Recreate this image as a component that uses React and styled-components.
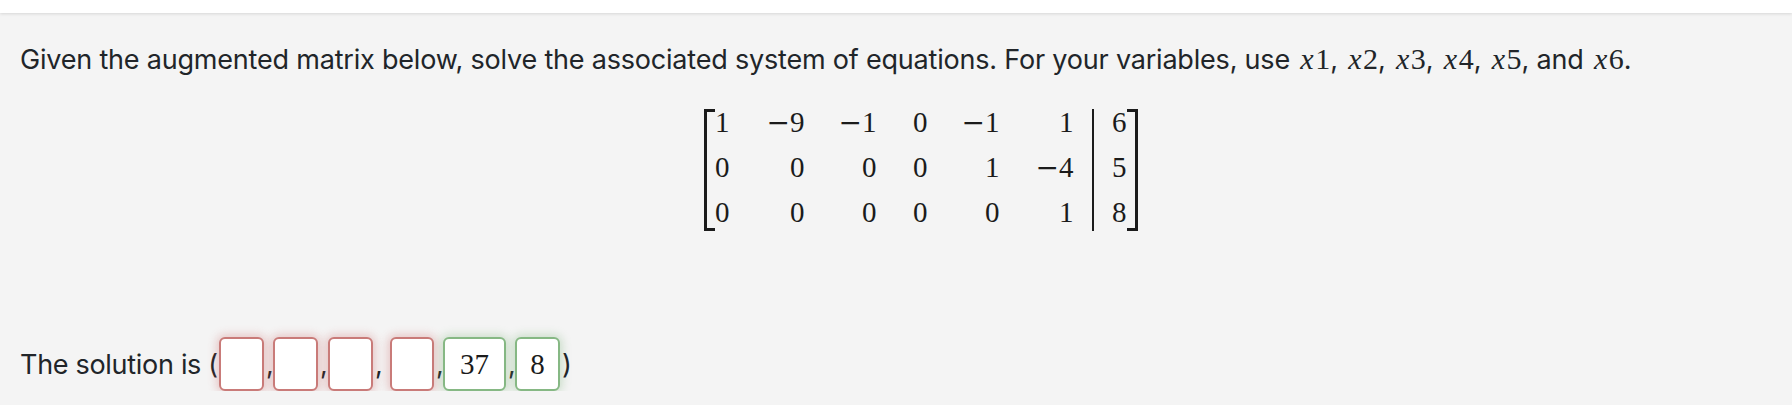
import React from "react";
import styled, { createGlobalStyle } from "styled-components";

const GlobalStyle = createGlobalStyle`
  html, body { margin: 0; padding: 0; }
  body {
    background: #f4f4f4;
    color: #212529;
    font-family: Inter, "Noto Sans", "Liberation Sans", sans-serif;
  }
`;

const TopBar = styled.div`
  height: 13px;
  background: #ffffff;
  box-shadow: 0 1px 3px rgba(0, 0, 0, 0.12);
`;

const Content = styled.main`
  padding: 26px 20px 0 20px;
`;

const Prompt = styled.p`
  margin: 0;
  font-size: 27px;
  letter-spacing: -0.2px;
  line-height: 40px;
  white-space: nowrap;
`;

const MathVar = styled.span`
  font-family: "Liberation Serif", "DejaVu Serif", serif;
  font-size: 30px;
  letter-spacing: 0;
  padding-left: 3px;
`;

const Italic = styled.i`
  font-style: italic;
  margin-right: 1.5px;
`;

const Display = styled.div`
  display: flex;
  justify-content: center;
  margin-top: 20px;
  padding-left: 49px;
`;

const Matrix = styled.div`
  display: flex;
  align-items: stretch;
  font-family: "Liberation Serif", "DejaVu Serif", serif;
  font-size: 29px;
  color: #1b1b1b;
`;

const Bracket = styled.div`
  width: 8px;
  margin: 9px 0 4px 0;
  border: 3px solid #1b1b1b;
  ${(p) => (p.$side === "left" ? "border-right: none;" : "border-left: none;")}
`;

const Grid = styled.div`
  display: grid;
  grid-template-columns: ${(p) => p.$cols};
  grid-auto-rows: 45px;
  line-height: 45px;
`;

const Cell = styled.div`
  text-align: right;
  white-space: nowrap;
`;

const Minus = styled.span`
  font-family: "DejaVu Serif", serif;
  font-size: 28px;
`;

const Divider = styled.div`
  width: 2px;
  margin: 9px 0 4px 18px;
  background: #1b1b1b;
`;

const SolutionRow = styled.div`
  display: flex;
  align-items: center;
  margin-top: 102px;
  font-size: 27px;
  letter-spacing: -0.3px;
  white-space: pre;
`;

const Lead = styled.span`
  margin-right: 1px;
`;

const Sep = styled.span`
  width: ${(p) => p.$w}px;
  padding-left: 2px;
  box-sizing: border-box;
`;

const AnswerBox = styled.div`
  box-sizing: border-box;
  width: ${(p) => p.$width}px;
  height: 54px;
  background: #ffffff;
  border: 2px solid ${(p) => (p.$ok ? "#86b884" : "#c97b79")};
  border-radius: 6px;
  box-shadow: 0 0 10px 2px
    ${(p) => (p.$ok ? "rgba(110, 170, 105, 0.32)" : "rgba(200, 90, 90, 0.32)")};
  display: flex;
  align-items: center;
  justify-content: center;
  font-family: "Liberation Serif", "DejaVu Serif", serif;
  font-size: 29px;
  letter-spacing: 0;
  color: #1b1b1b;
`;

const matrix = [
  [1, -9, -1, 0, -1, 1],
  [0, 0, 0, 0, 1, -4],
  [0, 0, 0, 0, 0, 1],
];
const aug = [6, 5, 8];

const Num = ({ v }) =>
  v < 0 ? (
    <>
      <Minus>−</Minus>
      {Math.abs(v)}
    </>
  ) : (
    <>{v}</>
  );

const Var = ({ n }) => (
  <MathVar>
    <Italic>x</Italic>
    {n}
  </MathVar>
);

const answers = [
  { w: 45, ok: false, v: "", sep: 9 },
  { w: 45, ok: false, v: "", sep: 10 },
  { w: 45, ok: false, v: "", sep: 17 },
  { w: 44, ok: false, v: "", sep: 9 },
  { w: 63, ok: true, v: "37", sep: 9 },
  { w: 45, ok: true, v: "8" },
];

export default function App() {
  return (
    <>
      <GlobalStyle />
      <TopBar />
      <Content>
        <Prompt>
          Given the augmented matrix below, solve the associated system of
          equations. For your variables, use <Var n={1} />, <Var n={2} />,{" "}
          <Var n={3} />, <Var n={4} />, <Var n={5} />, and <Var n={6} />.
        </Prompt>
        <Display>
          <Matrix>
            <Bracket $side="left" />
            <Grid $cols="15px 75px 72px 51px 72px 74px">
              {matrix.flat().map((v, i) => (
                <Cell key={i}>
                  <Num v={v} />
                </Cell>
              ))}
            </Grid>
            <Divider />
            <Grid $cols="33px">
              {aug.map((v, i) => (
                <Cell key={i}>{v}</Cell>
              ))}
            </Grid>
            <Bracket $side="right" />
          </Matrix>
        </Display>
        <SolutionRow>
          <Lead>The solution is (</Lead>
          {answers.map((a, i) => (
            <React.Fragment key={i}>
              <AnswerBox $width={a.w} $ok={a.ok}>
                {a.v}
              </AnswerBox>
              {a.sep ? <Sep $w={a.sep}>,</Sep> : <Sep $w={9}>)</Sep>}
            </React.Fragment>
          ))}
        </SolutionRow>
      </Content>
    </>
  );
}
